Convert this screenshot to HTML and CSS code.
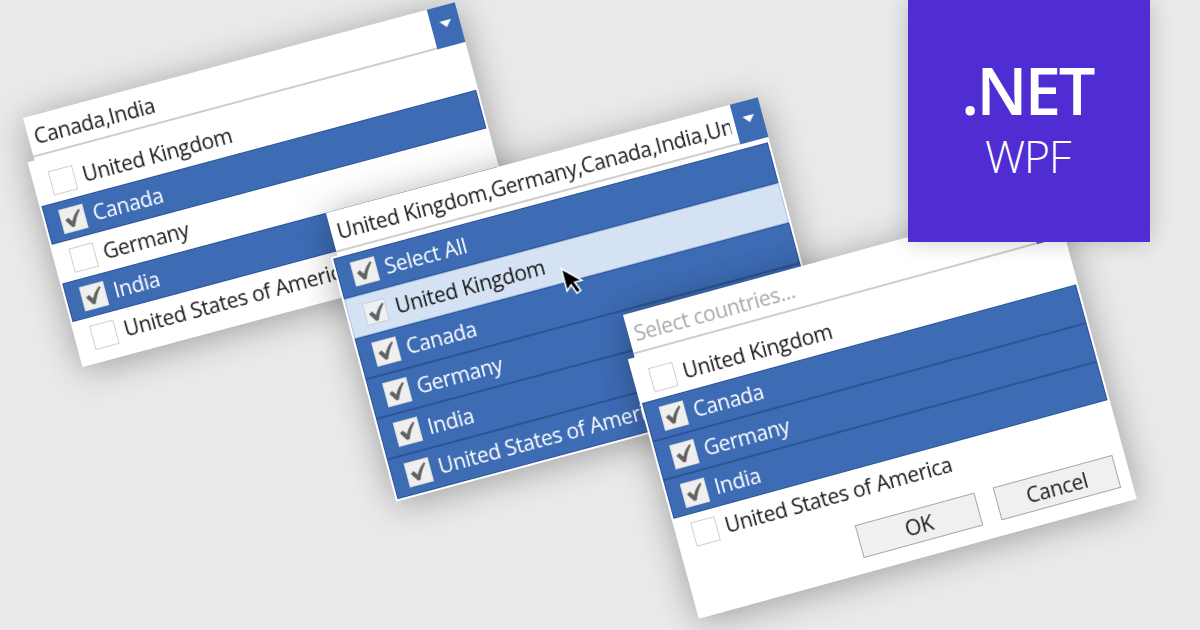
FILE: index.html
```html
<!DOCTYPE html>
<html lang="en">
<head>
<meta charset="utf-8">
<title>.NET WPF CheckedComboBox</title>
<link rel="stylesheet" href="styles.css">
</head>
<body>
<svg class="defs" width="0" height="0" aria-hidden="true">
  <symbol id="check" viewBox="0 0 25 25"><path d="M4.5 12.5 L8.2 10.3 L11.4 15 C13.4 11.2 16.2 7.4 20.8 4.2 L22 5.6 C18 10 15 15 12.8 21.2 L10 21.2 Z"/></symbol>
  <symbol id="arrow" viewBox="0 0 13 20"><path d="M1 1 L1 15.5 L4.4 12.4 L6.7 18.4 L9.4 17.3 L7 11.4 L11.6 11.4 Z" fill="#000" stroke="#fff" stroke-width="1"/></symbol>
</svg>
<main class="canvas">
  <section class="window w1">
    <div class="combo"><span class="value">Canada,India</span><span class="drop"><i class="tri"></i></span></div>
    <div class="popup">
      <div class="row"><span class="box"></span>United Kingdom</div>
      <div class="row on"><span class="box"><svg class="tick"><use href="#check"/></svg></span>Canada</div>
      <div class="row"><span class="box"></span>Germany</div>
      <div class="row on"><span class="box"><svg class="tick"><use href="#check"/></svg></span>India</div>
      <div class="row"><span class="box"></span>United States of America</div>
    </div>
  </section>
  <section class="window w2">
    <div class="combo"><span class="value">United Kingdom,Germany,Canada,India,United States of America</span><span class="drop"><i class="tri"></i></span></div>
    <div class="popup tight">
      <div class="row on"><span class="box"><svg class="tick"><use href="#check"/></svg></span>Select All</div>
      <div class="row hover"><span class="box"><svg class="tick"><use href="#check"/></svg></span>United Kingdom</div>
      <div class="row on"><span class="box"><svg class="tick"><use href="#check"/></svg></span>Canada</div>
      <div class="row on"><span class="box"><svg class="tick"><use href="#check"/></svg></span>Germany</div>
      <div class="row on"><span class="box"><svg class="tick"><use href="#check"/></svg></span>India</div>
      <div class="row on"><span class="box"><svg class="tick"><use href="#check"/></svg></span>United States of America</div>
    </div>
    <svg class="pointer"><use href="#arrow"/></svg>
  </section>
  <section class="window w3">
    <div class="combo"><span class="value hint">Select countries...</span><span class="drop"><i class="tri"></i></span></div>
    <div class="popup">
      <div class="row"><span class="box"></span>United Kingdom</div>
      <div class="row on"><span class="box"><svg class="tick"><use href="#check"/></svg></span>Canada</div>
      <div class="row on"><span class="box"><svg class="tick"><use href="#check"/></svg></span>Germany</div>
      <div class="row on"><span class="box"><svg class="tick"><use href="#check"/></svg></span>India</div>
      <div class="row"><span class="box"></span>United States of America</div>
      <div class="actions"><button class="btn">OK</button><button class="btn">Cancel</button></div>
    </div>
  </section>
  <aside class="badge">
    <div class="net">.NET</div>
    <div class="wpf">WPF</div>
  </aside>
</main>
</body>
</html>
```
FILE: styles.css
```css
* { box-sizing: border-box; }
html, body { margin: 0; padding: 0; }
body { width: 1200px; height: 630px; overflow: hidden; background: #eaeaea; font-family: "Open Sans", "Noto Sans", sans-serif; }
.defs { position: absolute; }
.canvas { position: relative; width: 1200px; height: 630px; overflow: hidden; }

.window {
  position: absolute;
  width: 447px;
  background: #fff;
  transform-origin: 0 0;
  transform: rotate(-15deg);
  filter: blur(0.35px) drop-shadow(0 4px 18px rgba(0, 0, 0, 0.33));
  color: #1a1a1a;
  font-size: 21px;
  letter-spacing: -0.3px;
}
.w1 { left: 23px; top: 118px; }
.w2 { left: 326px; top: 213px; }
.w3 { left: 623px; top: 315px; transform: rotate(-15.3deg); }

.combo {
  display: flex;
  height: 41px;
  background: #fff;
  border-bottom: 2px solid #cdcdcd;
}
.value {
  flex: 1;
  min-width: 0;
  margin-right: 5px;
  padding-left: 6px;
  line-height: 42px;
  white-space: nowrap;
  overflow: hidden;
}
.hint { color: #a8a8a8; }
.drop {
  flex: none;
  width: 29px;
  display: flex;
  justify-content: center;
  padding-top: 15px;
  margin-bottom: -2px;
  background: #3d6cb5;
}
.tri {
  width: 0;
  height: 0;
  border: 6px solid transparent;
  border-top: 7px solid #fff;
  border-bottom: 0;
}

.popup {
  margin: 3px 0 0 -7px;
  width: 454px;
  padding: 6px 2px 6px;
  background: #fff;
}
.popup.tight { padding: 2px; }
.row {
  display: flex;
  align-items: center;
  gap: 8px;
  height: 40px;
  padding-left: 15px;
  white-space: nowrap;
  overflow: hidden;
}
.tight .row { height: 41.5px; }
.box {
  flex: none;
  width: 25px;
  height: 25px;
  background: #fff;
  border: 1.5px solid #cfcfcf;
}
.tick { display: block; width: 24px; height: 24px; margin: -1px; fill: #626262; }
.on { background: #3d6cb5; color: #fff; border: 1px solid #2b5495; padding-left: 14px; }
.on .box { background: #efefef; border-color: #dcdcdc; }
.hover { background: #d5e2f3; border: 1px solid #a8c0e6; color: #151515; padding-left: 14px; }
.hover .box { width: 23px; height: 23px; background: #eceff4; margin: 0 1px; }

.actions {
  display: flex;
  justify-content: flex-end;
  gap: 19px;
  padding: 14px 10px 9px 0;
}
.btn {
  width: 124px;
  height: 34px;
  padding: 0;
  font: inherit;
  letter-spacing: inherit;
  color: #1a1a1a;
  line-height: 30px;
  background: #f0f0f0;
  border: 1.5px solid #a6a6a6;
}

.pointer { position: absolute; left: 211px; top: 113px; width: 21px; height: 32px; }

.badge {
  position: absolute;
  left: 908px;
  top: 0;
  width: 242px;
  height: 242px;
  background: #502dd3;
  color: #fff;
  text-align: center;
  box-shadow: 0 0 22px rgba(0, 0, 0, 0.2);
  padding-top: 57px;
}
.net { font-size: 65px; font-weight: 600; line-height: 66px; letter-spacing: -2.5px; margin-left: -4px; }
.wpf { font-size: 45px; font-weight: 300; line-height: 52px; letter-spacing: -1.4px; margin: 7px 0 0 -3px; }
```
